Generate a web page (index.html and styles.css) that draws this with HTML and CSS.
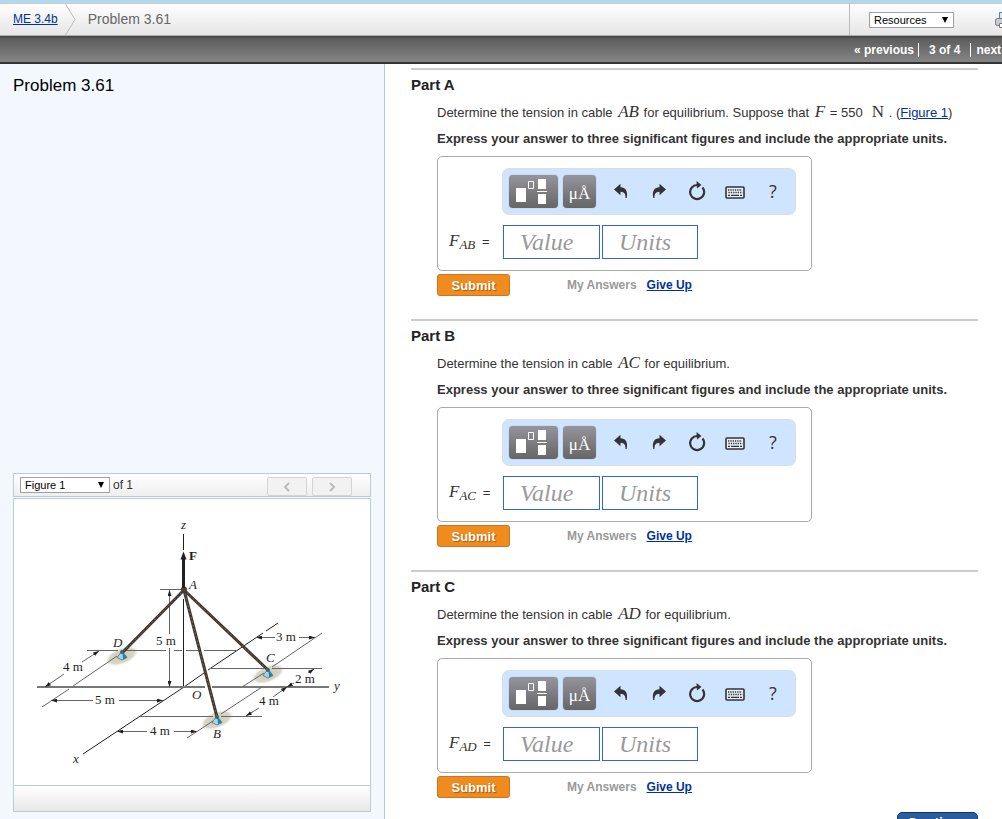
FILE: index.html
```html
<!DOCTYPE html>
<html lang="en">
<head>
    <meta charset="UTF-8">
    <meta name="viewport" content="width=device-width, initial-scale=1.0">
    <title>ME 3.4b - Problem 3.61</title>
    <link rel="stylesheet" href="styles.css">
</head>
<body>
    <!-- shared icons -->
    <svg class="sprite" aria-hidden="true">
        <symbol id="i-template" viewBox="0 0 49 33">
            <path fill="#fff" d="M7 13h10v14H7zM29 4h8v10h-8zM29 19h8v10h-8zM28 16h10v1H28z"/>
            <path fill="none" stroke="#fff" d="M19.500 6.500h5v7h-5z"/>
        </symbol>
        <symbol id="i-undo" viewBox="0 0 16 16">
            <path fill="#333" d="M1 6.500 7.500.8v3.400c5 .2 7.700 3.300 6.200 10.800h-1.200c.2-4-1.200-6.200-5-6.300v3.500z"/>
        </symbol>
        <symbol id="i-redo" viewBox="0 0 16 16">
            <path fill="#333" d="M15 6.500 8.500.8v3.400C3.500 4.400.8 7.500 2.300 15h1.200c-.2-4 1.200-6.200 5-6.300v3.500z"/>
        </symbol>
        <symbol id="i-reset" viewBox="0 0 18 20">
            <path fill="none" stroke="#333" stroke-width="2.200" d="M14.500 6.500A7 7 0 1 1 9.500 4"/>
            <path fill="#333" d="M8.500 0 13.500 4 9 7.500z"/>
        </symbol>
        <symbol id="i-keyboard" viewBox="0 0 20 13">
            <rect x="1" y="1" width="18" height="11" rx="1" fill="#e8f1fb" stroke="#333" stroke-width="1.600"/>
            <path fill="none" stroke="#333" stroke-width="1.300" stroke-dasharray="1.300 1" d="M3 4h14M3.500 6.500h14"/>
            <path fill="none" stroke="#333" stroke-width="1.300" d="M3 9.300h2M6 9.300h8M15 9.300h2"/>
        </symbol>
    </svg>

    <header class="topbar">
        <nav class="crumbs">
            <a href="#">ME 3.4b</a>
            <svg class="crumb-arrow" viewBox="0 0 11 31" aria-hidden="true"><path d="M.5 0 10 15.500.5 31"/></svg>
            <span>Problem 3.61</span>
        </nav>
        <div class="tools">
            <span class="select resources">
                <select aria-label="Resources"><option>Resources</option></select>
            </span>
            <a href="#" class="print" aria-label="Print">
                <svg width="18" height="17" viewBox="0 0 18 17">
                    <path fill="#d5e9fb" stroke="#4a7fc0" d="M4.500 7.500v-7h8l2 2v5"/>
                    <rect x=".5" y="6.500" width="17" height="7" rx="2" fill="#c8ccd2" stroke="#777"/>
                    <path fill="#fff" stroke="#777" d="M4.500 11.500h9v4h-9z"/>
                </svg>
            </a>
        </div>
    </header>
    <nav class="pager">
        <div class="pager-links">
            <a href="#">« previous</a>
            <span>3 of 4</span>
            <a href="#">next</a>
        </div>
    </nav>

    <div class="content">
        <aside class="side">
            <h1>Problem 3.61</h1>
            <div class="figure-head">
                <span class="select figure-select">
                    <select id="figure"><option>Figure 1</option></select>
                </span>
                <label for="figure">of 1</label>
                <div class="figure-nav">
                    <button type="button" aria-label="Previous figure"><svg width="8" height="10" viewBox="0 0 8 10"><path d="M6 1 2 5l4 4"/></svg></button>
                    <button type="button" aria-label="Next figure"><svg width="8" height="10" viewBox="0 0 8 10"><path d="m2 1 4 4-4 4"/></svg></button>
                </div>
            </div>
            <div class="figure-view">
                <svg class="diagram" viewBox="14 499 356 286">
                    <defs>
                        <radialGradient id="shade">
                            <stop offset="0" stop-color="#cbc9b6"/>
                            <stop offset=".7" stop-color="#d8d6c6"/>
                            <stop offset="1" stop-color="#fff" stop-opacity="0"/>
                        </radialGradient>
                        <marker id="tip" viewBox="0 0 6 4" refX="6" refY="2" markerWidth="6" markerHeight="4" markerUnits="userSpaceOnUse" orient="auto-start-reverse">
                            <path fill="#231f20" d="M0 0 6 2 0 4z"/>
                        </marker>
                        <ellipse id="ground" rx="19" ry="9" fill="url(#shade)" transform="rotate(-22)"/>
                        <g id="anchor">
                            <path fill="#a9d3e6" stroke="#2d5563" stroke-width=".6" d="M-1.500-2-5 2.500 0 5l5-2.500L1.500-2z"/>
                            <path fill="#1c89a8" d="M.5-2 1 4.500 5 2.500 1.500-2z"/>
                            <circle cy="-3" r="2" fill="#3d6473"/>
                        </g>
                    </defs>
                    <use href="#ground" x="122" y="656"/>
                    <use href="#ground" x="268" y="674"/>
                    <use href="#ground" x="217" y="720"/>
                    <!-- axes -->
                    <g class="axis">
                        <path d="M183.500 534v16M183.500 599v88M83 754l101-67 20-14M208 670l55-37M266 631l12-8"/>
                        <path class="y-axis" d="M37 687h168M212 687h117"/>
                    </g>
                    <!-- grid lines -->
                    <g class="thin">
                        <path d="M160 589.500h22M87 650.500h31M126 650.500h40M174 650.500h8M186 650.500h12M204 650.500h32M210 668.500h54M272 668.500h50M140 716.500h73M221 716.500h41"/>
                        <path d="M42 707l27-18M73 686l44-30M187 738l26-17M221 714l41-27M242 687l22-14M272 667l50-34"/>
                    </g>
                    <!-- dimensions -->
                    <g class="thin">
                        <path marker-start="url(#tip)" d="M169.500 590v44"/>
                        <path marker-end="url(#tip)" d="M169.500 648v39"/>
                        <path marker-start="url(#tip)" d="M45 687l19-13"/>
                        <path marker-end="url(#tip)" d="M82 662l17-11"/>
                        <path marker-start="url(#tip)" d="M51 700.500h42"/>
                        <path marker-end="url(#tip)" d="M119 700.500h44"/>
                        <path marker-start="url(#tip)" d="M117 731.500h30"/>
                        <path marker-end="url(#tip)" d="M174 731.500h23"/>
                        <path marker-start="url(#tip)" d="M256 637.500h19"/>
                        <path marker-end="url(#tip)" d="M299 637.500h16"/>
                        <path marker-start="url(#tip)" d="M314 669l-6 4"/>
                        <path marker-end="url(#tip)" d="M294 683l-7 4"/>
                        <path marker-start="url(#tip)" d="M287 687l-14 10"/>
                        <path marker-end="url(#tip)" d="M259 708l-13 8"/>
                    </g>
                    <!-- cables -->
                    <g class="cable">
                        <path d="M184 590l-62 63M184 590l33 127M184 590l84 80"/>
                        <path class="strand" d="M184 590l-62 63M184 590l33 127M184 590l84 80"/>
                    </g>
                    <use href="#anchor" x="122" y="655"/>
                    <use href="#anchor" x="268" y="673"/>
                    <use href="#anchor" x="217" y="720"/>
                    <circle cx="184" cy="589.500" r="3" fill="#4a4038"/>
                    <path class="force" d="M183.500 588v-30"/>
                    <path fill="#231f20" d="M183.500 551.500l3 8h-6z"/>
                    <g class="names">
                        <text x="181" y="529">z</text>
                        <text x="189" y="589">A</text>
                        <text x="113" y="647">D</text>
                        <text x="266" y="662">C</text>
                        <text x="192" y="699">O</text>
                        <text x="213" y="738">B</text>
                        <text x="334" y="690">y</text>
                        <text x="73" y="763">x</text>
                    </g>
                    <g class="sizes">
                        <text class="vector" x="189" y="560">F</text>
                        <text x="156" y="645">5 m</text>
                        <text x="63" y="671">4 m</text>
                        <text x="95" y="704">5 m</text>
                        <text x="150" y="735">4 m</text>
                        <text x="276" y="641">3 m</text>
                        <text x="295" y="683">2 m</text>
                        <text x="259" y="705">4 m</text>
                    </g>
                </svg>
                <div class="figure-foot"></div>
            </div>
        </aside>

        <main class="parts">
            <section class="part">
                <h2>Part A</h2>
                <div class="part-body">
                    <p>Determine the tension in cable <i class="math">AB</i> for equilibrium. Suppose that <i class="math">F</i> = 550 &nbsp;<span class="math">N</span> . (<a href="#">Figure 1</a>)</p>
                    <p class="express">Express your answer to three significant figures and include the appropriate units.</p>
                    <div class="answer">
                        <div class="toolbar">
                            <button type="button" class="key template" aria-label="Templates"><svg width="49" height="33"><use href="#i-template"/></svg></button>
                            <button type="button" class="key symbols">μÅ</button>
                            <div class="actions">
                                <button type="button" aria-label="Undo"><svg width="16" height="16"><use href="#i-undo"/></svg></button>
                                <button type="button" aria-label="Redo"><svg width="16" height="16"><use href="#i-redo"/></svg></button>
                                <button type="button" aria-label="Reset"><svg width="18" height="20"><use href="#i-reset"/></svg></button>
                                <button type="button" aria-label="Keyboard"><svg class="keyboard" width="20" height="13"><use href="#i-keyboard"/></svg></button>
                                <button type="button">?</button>
                            </div>
                        </div>
                        <label for="value-a"><i>F<sub>AB</sub></i> =</label>
                        <div class="fields">
                            <input type="text" id="value-a" placeholder="Value">
                            <input type="text" class="units" aria-label="Units" placeholder="Units">
                        </div>
                    </div>
                    <div class="submit-row">
                        <button type="submit" class="submit">Submit</button>
                        <span>My Answers</span>
                        <a href="#">Give Up</a>
                    </div>
                </div>
            </section>

            <section class="part">
                <h2>Part B</h2>
                <div class="part-body">
                    <p>Determine the tension in cable <i class="math">AC</i> for equilibrium.</p>
                    <p class="express">Express your answer to three significant figures and include the appropriate units.</p>
                    <div class="answer">
                        <div class="toolbar">
                            <button type="button" class="key template" aria-label="Templates"><svg width="49" height="33"><use href="#i-template"/></svg></button>
                            <button type="button" class="key symbols">μÅ</button>
                            <div class="actions">
                                <button type="button" aria-label="Undo"><svg width="16" height="16"><use href="#i-undo"/></svg></button>
                                <button type="button" aria-label="Redo"><svg width="16" height="16"><use href="#i-redo"/></svg></button>
                                <button type="button" aria-label="Reset"><svg width="18" height="20"><use href="#i-reset"/></svg></button>
                                <button type="button" aria-label="Keyboard"><svg class="keyboard" width="20" height="13"><use href="#i-keyboard"/></svg></button>
                                <button type="button">?</button>
                            </div>
                        </div>
                        <label for="value-b"><i>F<sub>AC</sub></i> =</label>
                        <div class="fields">
                            <input type="text" id="value-b" placeholder="Value">
                            <input type="text" class="units" aria-label="Units" placeholder="Units">
                        </div>
                    </div>
                    <div class="submit-row">
                        <button type="submit" class="submit">Submit</button>
                        <span>My Answers</span>
                        <a href="#">Give Up</a>
                    </div>
                </div>
            </section>

            <section class="part">
                <h2>Part C</h2>
                <div class="part-body">
                    <p>Determine the tension in cable <i class="math">AD</i> for equilibrium.</p>
                    <p class="express">Express your answer to three significant figures and include the appropriate units.</p>
                    <div class="answer">
                        <div class="toolbar">
                            <button type="button" class="key template" aria-label="Templates"><svg width="49" height="33"><use href="#i-template"/></svg></button>
                            <button type="button" class="key symbols">μÅ</button>
                            <div class="actions">
                                <button type="button" aria-label="Undo"><svg width="16" height="16"><use href="#i-undo"/></svg></button>
                                <button type="button" aria-label="Redo"><svg width="16" height="16"><use href="#i-redo"/></svg></button>
                                <button type="button" aria-label="Reset"><svg width="18" height="20"><use href="#i-reset"/></svg></button>
                                <button type="button" aria-label="Keyboard"><svg class="keyboard" width="20" height="13"><use href="#i-keyboard"/></svg></button>
                                <button type="button">?</button>
                            </div>
                        </div>
                        <label for="value-c"><i>F<sub>AD</sub></i> =</label>
                        <div class="fields">
                            <input type="text" id="value-c" placeholder="Value">
                            <input type="text" class="units" aria-label="Units" placeholder="Units">
                        </div>
                    </div>
                    <div class="submit-row">
                        <button type="submit" class="submit">Submit</button>
                        <span>My Answers</span>
                        <a href="#">Give Up</a>
                    </div>
                </div>
            </section>

            <button type="button" class="continue">Continue</button>
        </main>
    </div>
</body>
</html>
```
FILE: styles.css
```css
* {
    box-sizing: border-box;
}

body {
    margin: 0;
    height: 100vh;
    display: flex;
    flex-direction: column;
    overflow: hidden;
    font-family: "Liberation Sans", Arial, sans-serif;
    font-size: 13px;
    color: #333;
    background: #fff;
}

a {
    color: #039;
}

button {
    padding: 0;
    font-family: inherit;
    cursor: pointer;
}

.sprite {
    display: none;
}

/* Header */
.topbar {
    flex: none;
    display: flex;
    height: 36px;
    border-top: 3px solid #b0d8f0;
    border-bottom: 1px solid #aaa;
    background: linear-gradient(#fff, #e6e6e6);
    box-shadow: inset 0 1px #ccc;
}

.crumbs {
    flex: 1;
    display: flex;
    align-items: center;
    padding-left: 13px;
    font-size: 14px;
    color: #666;
}

.crumbs a {
    font-size: 12px;
}

.crumb-arrow {
    width: 11px;
    height: 31px;
    margin: 0 12px 0 7px;
    fill: none;
    stroke: #bbb;
}

.tools {
    flex: 0 0 153px;
    display: flex;
    align-items: center;
    gap: 41px;
    padding: 2px 0 0 19px;
    border-left: 1px solid #bbb;
    overflow: hidden;
}

.print,
.print svg {
    display: block;
}

.select {
    position: relative;
    flex: none;
    display: block;
}

.select select {
    display: block;
    width: 100%;
    height: 16px;
    padding: 0 4px;
    font: 11px "Liberation Sans", Arial, sans-serif;
    color: #000;
    background: #fff;
    border: 1px solid #a0a0a0;
    border-radius: 0;
    appearance: none;
}

.select::after {
    content: "";
    position: absolute;
    top: 5px;
    right: 6px;
    border: 3px solid transparent;
    border-top: 6px solid #000;
    border-bottom: 0;
    pointer-events: none;
}

.resources {
    width: 85px;
}

.pager {
    flex: none;
    display: flex;
    justify-content: flex-end;
    height: 28px;
    border-top: 2px solid #4c4c4c;
    border-bottom: 2px solid #333;
    background: linear-gradient(#5c5c5c, #858585);
}

.pager-links {
    flex: 0 0 148px;
    display: flex;
    align-items: center;
    overflow: hidden;
    white-space: nowrap;
    font-size: 12px;
    font-weight: bold;
    color: #fff;
}

.pager-links a {
    color: #fff;
    text-decoration: none;
}

.pager-links span {
    margin: 0 5px 0 4px;
    padding: 0 10px;
    border: solid #fff;
    border-width: 0 1px;
}

/* Columns */
.content {
    flex: 1;
    display: flex;
    min-height: 0;
}

.side {
    flex: 0 0 385px;
    display: flex;
    flex-direction: column;
    padding: 12px 13px 7px;
    border-right: 1px solid #b8cce0;
    background: #f3f8ff;
}

.side h1 {
    margin: 0 0 auto;
    font-size: 17px;
    font-weight: normal;
    line-height: 20px;
    color: #000;
}

.figure-head {
    display: flex;
    align-items: center;
    gap: 3px;
    height: 24px;
    margin-bottom: 1px;
    padding-left: 6px;
    border: 1px solid #b8cce0;
    background: linear-gradient(#fff, #eee);
    font-size: 12px;
}

.figure-select {
    width: 90px;
}

.figure-nav {
    display: flex;
    align-self: flex-end;
    gap: 5px;
    margin: 0 18px 0 auto;
}

.figure-nav button {
    display: flex;
    align-items: center;
    justify-content: center;
    width: 40px;
    height: 19px;
    border: 1px solid #d4d4d4;
    border-radius: 2px;
    background: #f2f2f2;
}

.figure-nav svg {
    fill: none;
    stroke: #bbb;
    stroke-width: 2;
}

.figure-view {
    border: 1px solid #b8cce0;
    background: #fff;
}

.figure-foot {
    height: 26px;
    border-top: 1px solid #b8cce0;
    background: linear-gradient(#fff, #e8e8e8);
}

/* Diagram */
.diagram {
    display: block;
    width: 100%;
    font-family: "Liberation Serif", "Times New Roman", serif;
    font-size: 13px;
    fill: #231f20;
}

.axis,
.thin,
.cable {
    fill: none;
    stroke: #231f20;
}

.y-axis {
    stroke: #777;
    stroke-width: 2;
}

.thin {
    stroke: #666;
}

.cable {
    stroke: #3f362f;
    stroke-width: 3;
}

.strand {
    stroke: #75685b;
    stroke-width: 1;
    stroke-dasharray: 2 2;
}

.force {
    stroke: #231f20;
    stroke-width: 3;
}

.names {
    font-style: italic;
}

.vector {
    font-weight: bold;
}

/* Parts */
.parts {
    flex: 1;
    min-width: 0;
    padding: 4px 24px 24px 26px;
    overflow: auto;
    scrollbar-width: none;
}

.part {
    padding: 7px 0 23px;
    border-top: 2px solid #ccc;
}

.part:last-of-type {
    padding-bottom: 14px;
}

.part h2 {
    margin: 0 0 10px;
    font-size: 15px;
    line-height: 16px;
    color: #222;
}

.part-body {
    padding-left: 26px;
}

.part-body p {
    margin: 0 0 6px;
    line-height: 20px;
}

.part-body .express {
    margin-bottom: 7px;
    font-weight: bold;
}

.math {
    margin: 0 1px 0 2px;
    font-family: "Liberation Serif", "Times New Roman", serif;
    font-size: 17px;
    line-height: 0;
}

.answer {
    display: grid;
    grid-template-columns: 53px 294px;
    row-gap: 10px;
    align-items: center;
    width: max-content;
    padding: 11px 15px 11px 11px;
    border: 1px solid #aaa;
    border-radius: 5px;
}

.toolbar {
    grid-column: 2;
    display: flex;
    align-items: center;
    gap: 5px;
    height: 47px;
    padding-left: 6px;
    border: 1px solid #ddd;
    border-radius: 7px;
    background: #cfe5ff;
}

.key {
    height: 33px;
    border: 0;
    border-radius: 4px;
    background: linear-gradient(#94949c, #666);
    box-shadow: 0 0 1px #777;
    color: #fff;
}

.key svg {
    display: block;
}

.template {
    width: 49px;
}

.symbols {
    width: 33px;
    padding-top: 5px;
    font-family: "Liberation Serif", "Times New Roman", serif;
    font-size: 17px;
}

.actions {
    display: flex;
    margin: 0 0 2px 1px;
}

.actions button {
    display: flex;
    align-items: center;
    justify-content: center;
    width: 38px;
    height: 33px;
    border: 0;
    background: none;
    font-family: "Open Sans", sans-serif;
    font-size: 18px;
    color: #333;
}

.actions .keyboard {
    margin-top: 4px;
}

.answer label {
    padding-bottom: 3px;
}

.answer label i {
    margin-right: 3px;
    font-family: "Liberation Serif", "Times New Roman", serif;
    font-size: 17px;
    line-height: 20px;
}

.answer sub {
    font-size: 13px;
    line-height: 0;
    vertical-align: -3px;
}

.fields {
    display: flex;
    gap: 2px;
    padding-left: 1px;
}

.fields input {
    width: 97px;
    height: 34px;
    padding: 0 16px;
    border: 1px solid #36c;
    border-radius: 0;
    font: italic 24px "Liberation Serif", "Times New Roman", serif;
}

.fields .units {
    width: 96px;
}

.fields input::placeholder {
    color: #999;
}

.submit-row {
    display: flex;
    align-items: center;
    margin-top: 3px;
    font-size: 12px;
    font-weight: bold;
}

.submit-row span {
    margin: 0 10px 0 57px;
    color: #999;
}

.submit {
    width: 73px;
    height: 22px;
    border: 1px solid #c8742a;
    border-radius: 3px;
    background: #f08c1e;
    font-size: 13px;
    font-weight: bold;
    color: #fff;
    text-shadow: 1px 1px 1px #a65a10;
}

.continue {
    display: block;
    width: 81px;
    height: 22px;
    margin-left: auto;
    border: 1px solid #0f3a70;
    border-radius: 5px;
    background: #2a5c9e;
    font-size: 14px;
    font-weight: bold;
    color: #fff;
}
```
